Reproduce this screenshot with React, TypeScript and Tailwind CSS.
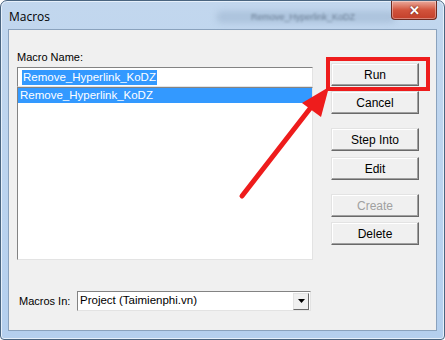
const font = { fontFamily: '"Liberation Sans", Arial, sans-serif' }

function Btn({ label, disabled, className = '' }: { label: string; disabled?: boolean; className?: string }) {
  return (
    <div
      className={`w-[88px] h-[23px] flex items-center justify-center text-[12px] bg-[#f0f0f0] border border-t-[#e3e3e3] border-l-[#e3e3e3] border-b-[#696969] border-r-[#696969] shadow-[inset_-1px_-1px_0_#a0a0a0,inset_1px_1px_0_#ffffff] ${disabled ? 'text-[#a0a0a0]' : 'text-black'} ${className}`}
    >
      {label}
    </div>
  )
}

export default function App() {
  return (
    <div className="w-[445px] h-[340px] relative overflow-hidden bg-white" style={font}>
      {/* window frame */}
      <div className="w-[445px] h-[340px] flex flex-col rounded-t-[7px] rounded-b-[4px] border border-[#4a6580] bg-gradient-to-b from-[#c2d7ee] via-[#bcd4ef] to-[#b4cfee] shadow-[inset_0_0_0_1px_#e6f0fb]">
        {/* title bar */}
        <div className="h-[28px] flex items-start relative">
          <span className="ml-[8px] mt-[7px] text-[12px] text-black" style={{ fontFamily: '"Open Sans", "Noto Sans", sans-serif' }}>Macros</span>
          <div className="absolute left-[215px] top-[10px] w-[180px] h-[12px] rounded-full bg-[#9fb6d0]/60 blur-[3px]"></div>
          <span className="absolute left-[250px] top-[10px] text-[9px] text-[#6b7f96] blur-[1px]">Remove_Hyperlink_KoDZ</span>
          <div className="absolute right-[7px] top-0 w-[46px] h-[19px] rounded-b-[4px] border border-t-0 border-[#6d2a20] bg-gradient-to-b from-[#e9a99c] via-[#d2533c] to-[#c33f2a] flex items-center justify-center shadow-[inset_0_0_0_1px_rgba(255,255,255,0.35)]">
            <span className="text-white font-bold text-[13px] leading-none" style={{ textShadow: '0 0 2px #4a1208' }}>✕</span>
          </div>
        </div>
        {/* client area */}
        <div className="ml-[7px] mr-[7px] h-[302px] border border-[#8aa2bd] bg-[#f0f0f0] flex pt-[20px] pl-[8px]">
          <div className="w-[296px] flex flex-col">
            <div className="h-[14px] text-[11px] leading-[14px] text-black">Macro Name:</div>
            <div className="mt-[3px] h-[20px] bg-white border border-t-[#838383] border-l-[#838383] border-b-[#e3e3e3] border-r-[#e3e3e3] flex items-center pl-[4px]">
              <span className="bg-[#3399ff] text-white text-[11.5px] leading-[15px] px-[1px]">Remove_Hyperlink_KoDZ</span>
            </div>
            <div className="h-[173px] bg-white border border-t-[#838383] border-l-[#838383] border-b-[#e3e3e3] border-r-[#e3e3e3]">
              <div className="h-[15px] bg-[#3399ff] text-white text-[11.5px] leading-[15px] pl-[2px]">Remove_Hyperlink_KoDZ</div>
            </div>
            <div className="mt-[31px] flex items-center">
              <span className="ml-[2px] w-[58px] text-[11px] text-black">Macros In:</span>
              <div className="w-[234px] h-[20px] bg-white border border-t-[#838383] border-l-[#838383] border-b-[#e3e3e3] border-r-[#e3e3e3] flex items-center">
                <span className="flex-1 pl-[2px] text-[11.5px] text-black">Project (Taimienphi.vn)</span>
                <div className="w-[16px] h-[17px] mr-[1px] bg-[#f0f0f0] border border-t-[#e3e3e3] border-l-[#e3e3e3] border-b-[#696969] border-r-[#696969] flex items-center justify-center">
                  <svg width="7" height="4" viewBox="0 0 7 4"><path d="M0 0h7L3.5 4z" fill="#000" /></svg>
                </div>
              </div>
            </div>
          </div>
          <div className="ml-[18px] flex flex-col pt-[13px]">
            <Btn label="Run" />
            <Btn label="Cancel" className="mt-[5px]" />
            <Btn label="Step Into" className="mt-[14px]" />
            <Btn label="Edit" className="mt-[6px]" />
            <Btn label="Create" disabled className="mt-[14px]" />
            <Btn label="Delete" className="mt-[5px]" />
          </div>
        </div>
      </div>
      {/* annotation overlay */}
      <div className="absolute left-[326px] top-[57px] w-[104px] h-[34px] border-[4px] border-[#ee1c1c]"></div>
      <svg className="absolute left-0 top-0" width="445" height="340" viewBox="0 0 445 340">
        <line x1="242" y1="196" x2="312" y2="106" stroke="#ee1c1c" strokeWidth="5" strokeLinecap="round" />
        <path d="M329 87 L321 117 L302 103 Z" fill="#ee1c1c" />
      </svg>
    </div>
  )
}
